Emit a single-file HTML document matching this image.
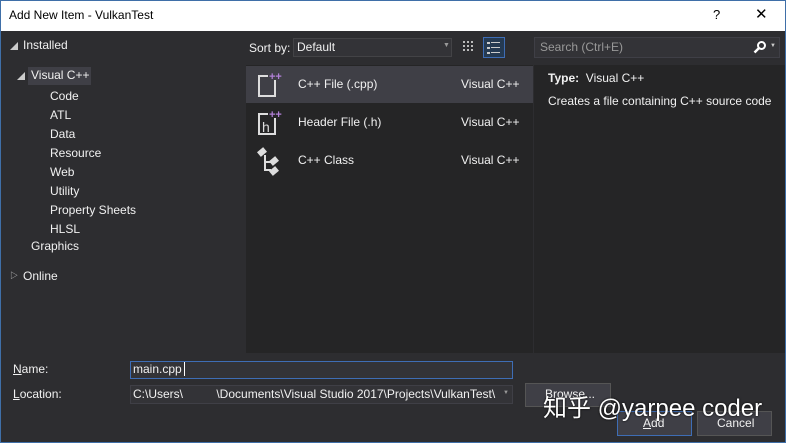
<!DOCTYPE html>
<html><head><style>
*{margin:0;padding:0;box-sizing:border-box}
body{width:786px;height:443px;overflow:hidden;background:#2d2d30;font-family:"Segoe UI","Liberation Sans","Noto Sans CJK SC",sans-serif;font-size:12px;color:#f1f1f1;position:relative}
.a{position:absolute;white-space:nowrap}
#frame{position:absolute;left:0;top:0;width:786px;height:443px;border:1px solid #3f6fa8;pointer-events:none}
#title{position:absolute;left:0;top:0;width:786px;height:31px;background:#fff;color:#000}
</style></head><body>
<div id="title">
<div class="a" style="left:9px;top:8px;font-size:12px">Add New Item - VulkanTest</div>
<div class="a" style="left:713px;top:7px;font-size:13px">?</div>
<div class="a" style="left:755px;top:5px;font-size:15px">✕</div>
</div>
<div class="a" style="left:10px;top:41px;font-size:8px;color:#ccc">◢</div>
<div class="a" style="left:23px;top:38px">Installed</div>
<div class="a" style="left:28px;top:67px;width:63px;height:18px;background:#3f3f46"></div>
<div class="a" style="left:17px;top:71px;font-size:8px;color:#ccc">◢</div>
<div class="a" style="left:31px;top:68px">Visual C++</div>
<div class="a" style="left:50px;top:87px;line-height:19px">Code<br>ATL<br>Data<br>Resource<br>Web<br>Utility<br>Property Sheets<br>HLSL</div>
<div class="a" style="left:31px;top:239px">Graphics</div>
<div class="a" style="left:10px;top:270px;font-size:8px;color:#ccc">▷</div>
<div class="a" style="left:23px;top:269px">Online</div>
<div class="a" style="left:249px;top:41px">Sort by:</div>
<div class="a" style="left:293px;top:38px;width:159px;height:19px;background:#333337;border:1px solid #434346"></div>
<div class="a" style="left:297px;top:40px">Default</div>
<div class="a" style="left:443px;top:42px;font-size:7px;color:#999">▼</div>
<svg class="a" style="left:462px;top:40px" width="14" height="14"><g fill="#bbb"><rect x="1" y="1" width="2" height="2"/><rect x="5" y="1" width="2" height="2"/><rect x="9" y="1" width="2" height="2"/><rect x="1" y="5" width="2" height="2"/><rect x="5" y="5" width="2" height="2"/><rect x="9" y="5" width="2" height="2"/><rect x="1" y="9" width="2" height="2"/><rect x="5" y="9" width="2" height="2"/><rect x="9" y="9" width="2" height="2"/></g></svg>
<div class="a" style="left:483px;top:37px;width:22px;height:21px;border:1px solid #3e6db5;background:#253a52"></div>
<svg class="a" style="left:487px;top:41px" width="14" height="14"><g fill="#ccc"><rect x="0" y="1" width="3" height="2"/><rect x="4" y="1" width="9" height="1"/><rect x="0" y="6" width="3" height="2"/><rect x="4" y="6" width="9" height="1"/><rect x="0" y="11" width="3" height="2"/><rect x="4" y="11" width="9" height="1"/></g></svg>
<div class="a" style="left:534px;top:37px;width:246px;height:21px;background:#333337;border:1px solid #3f3f46"></div>
<div class="a" style="left:540px;top:40px;color:#999">Search (Ctrl+E)</div>
<svg class="a" style="left:753px;top:40px" width="14" height="14"><circle cx="8.5" cy="5.5" r="3.5" fill="none" stroke="#fff" stroke-width="2"/><line x1="6" y1="8" x2="1.5" y2="12.5" stroke="#fff" stroke-width="2.5"/></svg>
<div class="a" style="left:770px;top:43px;font-size:6px;color:#ccc">▼</div>
<div class="a" style="left:246px;top:65px;width:287px;height:288px;background:#252526"></div>
<div class="a" style="left:246px;top:66px;width:287px;height:37px;background:#3f3f46"></div>
<svg class="a" style="left:256px;top:68px" width="30" height="32"><rect x="3" y="8" width="16" height="20" fill="none" stroke="#ddd" stroke-width="2"/><rect x="12" y="5" width="10" height="7" fill="#3f3f46"/><text x="13" y="12" fill="#b180d7" font-size="11" font-weight="bold" font-family="Liberation Sans">++</text></svg>
<svg class="a" style="left:256px;top:106px" width="30" height="32"><rect x="3" y="8" width="16" height="20" fill="none" stroke="#ddd" stroke-width="2"/><rect x="12" y="5" width="10" height="7" fill="#252526"/><text x="6" y="26" fill="#ddd" font-size="14" font-family="Liberation Sans">h</text><text x="13" y="12" fill="#b180d7" font-size="11" font-weight="bold" font-family="Liberation Sans">++</text></svg>
<svg class="a" style="left:254px;top:145px" width="30" height="32"><g fill="#ddd"><rect x="4" y="4" width="8" height="6" transform="rotate(-40 8 7)"/><rect x="16" y="13" width="8" height="6" transform="rotate(-40 20 16)"/><rect x="16" y="23" width="8" height="6" transform="rotate(-40 20 26)"/><rect x="10" y="10" width="2" height="16"/><rect x="10" y="16" width="7" height="2"/><rect x="10" y="24" width="7" height="2"/></g></svg>
<div class="a" style="left:298px;top:77px">C++ File (.cpp)</div>
<div class="a" style="left:461px;top:77px">Visual C++</div>
<div class="a" style="left:298px;top:115px">Header File (.h)</div>
<div class="a" style="left:461px;top:115px">Visual C++</div>
<div class="a" style="left:298px;top:153px">C++ Class</div>
<div class="a" style="left:461px;top:153px">Visual C++</div>
<div class="a" style="left:534px;top:65px;width:252px;height:288px;background:#252526"></div>
<div class="a" style="left:548px;top:71px"><b>Type:</b>&nbsp; Visual C++</div>
<div class="a" style="left:548px;top:94px">Creates a file containing C++ source code</div>
<div class="a" style="left:13px;top:362px"><u>N</u>ame:</div>
<div class="a" style="left:130px;top:361px;width:383px;height:18px;background:#333337;border:1px solid #3e6db5"></div>
<div class="a" style="left:133px;top:362px">main.cpp</div>
<div class="a" style="left:184px;top:362px;width:1px;height:14px;background:#fff"></div>
<div class="a" style="left:13px;top:387px"><u>L</u>ocation:</div>
<div class="a" style="left:130px;top:385px;width:383px;height:19px;background:#333337;border:1px solid #3f3f46"></div>
<div class="a" style="left:133px;top:387px">C:\Users\&nbsp;&nbsp;&nbsp;&nbsp;&nbsp;&nbsp;&nbsp;&nbsp;&nbsp;&nbsp;\Documents\Visual Studio 2017\Projects\VulkanTest\</div>
<div class="a" style="left:503px;top:390px;font-size:6px;color:#999">▼</div>
<div class="a" style="left:525px;top:383px;width:86px;height:24px;background:#3f3f46;border:1px solid #555"></div>
<div class="a" style="left:545px;top:387px">Browse...</div>
<div class="a" style="left:617px;top:411px;width:75px;height:25px;background:#3f3f46;border:1px solid #3e6db5"></div>
<div class="a" style="left:643px;top:416px"><u>A</u>dd</div>
<div class="a" style="left:697px;top:411px;width:75px;height:25px;background:#3f3f46;border:1px solid #555"></div>
<div class="a" style="left:717px;top:416px">Cancel</div>
<div class="a" style="left:543px;top:388px;font-size:24px;color:#fff;text-shadow:0 0 2px #000">知乎 @yarpee coder</div>
<div id="frame"></div>
</body></html>
